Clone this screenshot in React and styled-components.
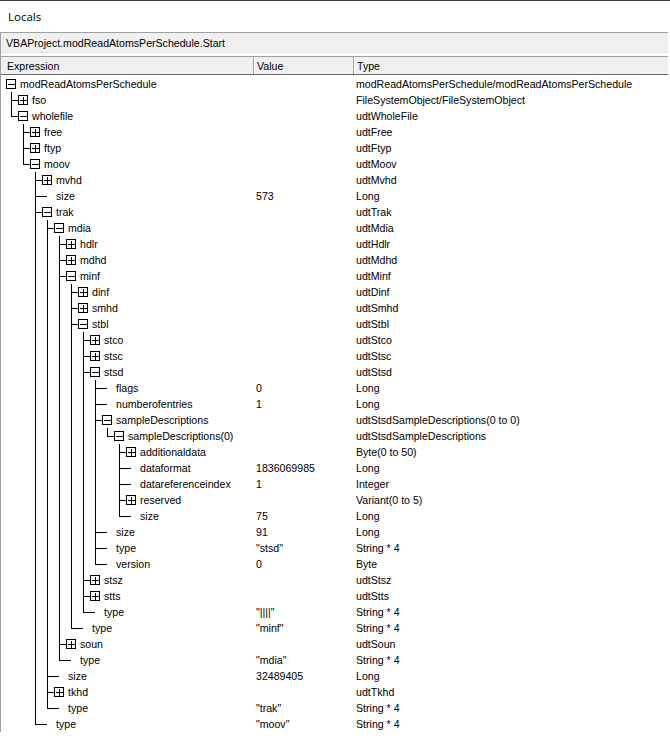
import React from 'react'
import styled, {createGlobalStyle} from "styled-components";

const GlobalStyle = createGlobalStyle`
  html, body {
    margin: 0;
    padding: 0;
    background: #ffffff;
  }
`

// [level, state ('+', '-' or ''), name, value, type]
const rows = [
  [0, '-', 'modReadAtomsPerSchedule', '', 'modReadAtomsPerSchedule/modReadAtomsPerSchedule'],
  [1, '+', 'fso', '', 'FileSystemObject/FileSystemObject'],
  [1, '-', 'wholefile', '', 'udtWholeFile'],
  [2, '+', 'free', '', 'udtFree'],
  [2, '+', 'ftyp', '', 'udtFtyp'],
  [2, '-', 'moov', '', 'udtMoov'],
  [3, '+', 'mvhd', '', 'udtMvhd'],
  [3, '', 'size', '573', 'Long'],
  [3, '-', 'trak', '', 'udtTrak'],
  [4, '-', 'mdia', '', 'udtMdia'],
  [5, '+', 'hdlr', '', 'udtHdlr'],
  [5, '+', 'mdhd', '', 'udtMdhd'],
  [5, '-', 'minf', '', 'udtMinf'],
  [6, '+', 'dinf', '', 'udtDinf'],
  [6, '+', 'smhd', '', 'udtSmhd'],
  [6, '-', 'stbl', '', 'udtStbl'],
  [7, '+', 'stco', '', 'udtStco'],
  [7, '+', 'stsc', '', 'udtStsc'],
  [7, '-', 'stsd', '', 'udtStsd'],
  [8, '', 'flags', '0', 'Long'],
  [8, '', 'numberofentries', '1', 'Long'],
  [8, '-', 'sampleDescriptions', '', 'udtStsdSampleDescriptions(0 to 0)'],
  [9, '-', 'sampleDescriptions(0)', '', 'udtStsdSampleDescriptions'],
  [10, '+', 'additionaldata', '', 'Byte(0 to 50)'],
  [10, '', 'dataformat', '1836069985', 'Long'],
  [10, '', 'datareferenceindex', '1', 'Integer'],
  [10, '+', 'reserved', '', 'Variant(0 to 5)'],
  [10, '', 'size', '75', 'Long'],
  [8, '', 'size', '91', 'Long'],
  [8, '', 'type', '"stsd"', 'String * 4'],
  [8, '', 'version', '0', 'Byte'],
  [7, '+', 'stsz', '', 'udtStsz'],
  [7, '+', 'stts', '', 'udtStts'],
  [7, '', 'type', '"||||"', 'String * 4'],
  [6, '', 'type', '"minf"', 'String * 4'],
  [5, '+', 'soun', '', 'udtSoun'],
  [5, '', 'type', '"mdia"', 'String * 4'],
  [4, '', 'size', '32489405', 'Long'],
  [4, '+', 'tkhd', '', 'udtTkhd'],
  [4, '', 'type', '"trak"', 'String * 4'],
  [3, '', 'type', '"moov"', 'String * 4'],
]

// does the line at level k keep going below row i?
const continues = (i, k) => {
  for (let j = i + 1; j < rows.length; j++) {
    if (rows[j][0] <= k) return rows[j][0] === k
  }
  return false
}

const Container = styled.div`
  width: 670px;
  height: 744px;
  overflow: hidden;
  border-top: 1px solid #3c3c3c;
  box-sizing: border-box;
  font-family: "Liberation Sans", Arial, sans-serif;
  font-size: 10.6px;
  color: #000;
`

const TitleBar = styled.div`
  height: 31px;
  display: flex;
  align-items: center;
  padding-left: 8px;
  font-family: "Open Sans", "Liberation Sans", sans-serif;
  font-size: 11.5px;
  color: #000;
`

const Panel = styled.div`
  border-left: 1px solid #a0a0a0;
  width: 667px;
`

const ContextBar = styled.div`
  height: 19px;
  display: flex;
  align-items: center;
  padding-left: 5px;
  background: #f0f0f0;
  border-top: 1px solid #a0a0a0;
  border-bottom: 1px solid #e3e3e3;
`

const Gap = styled.div`
  height: 3px;
  background: #ffffff;
`

const Header = styled.div`
  display: grid;
  grid-template-columns: 253px 100px 1fr;
  height: 17px;
  background: #f0f0f0;
  border-top: 1px solid #a0a0a0;
  border-bottom: 1px solid #696969;
`

const HeadCell = styled.div`
  display: flex;
  align-items: center;
  padding-left: ${props => props.first ? "6px" : "3px"};
  border-right: ${props => props.last ? "none" : "1px solid #a0a0a0"};
  box-shadow: ${props => props.first ? "none" : "inset 1px 0 0 #ffffff"};
`

const Body = styled.div`
  display: flex;
  flex-direction: column;
  padding-top: 1px;
`

const Row = styled.div`
  display: grid;
  grid-template-columns: 253px 100px 1fr;
  height: 16px;
  line-height: 16px;
  white-space: nowrap;
`

const Expr = styled.div`
  display: flex;
  align-items: center;
`

const Name = styled.span`
  padding-left: 1px;
`

const Cell = styled.div`
  padding-left: 2px;
`

const Guides = ({i, level, state}) => {
  const width = 12 * level + 18
  const lines = []
  for (let k = 1; k < level; k++) {
    if (continues(i, k)) {
      const x = 12 * k - 2 + 0.5
      lines.push(<line key={'v' + k} x1={x} y1={0} x2={x} y2={16} />)
    }
  }
  if (level > 0) {
    const x = 12 * level - 2 + 0.5
    lines.push(<line key="own" x1={x} y1={0} x2={x} y2={continues(i, level) ? 16 : 8.5} />)
    const end = state ? 12 * level + 5 : 12 * level + 10
    lines.push(<line key="h" x1={12 * level - 2} y1={8.5} x2={end} y2={8.5} />)
  }
  const bx = 12 * level + 5
  return (
    <svg width={width} height={16} style={{flex: 'none'}} shapeRendering="crispEdges">
      <g stroke="#000" strokeWidth="1">
        {lines}
        {state && (
          <>
            <rect x={bx + 0.5} y={3.5} width={9} height={9} fill="#fff" />
            <line x1={bx + 2} y1={8.5} x2={bx + 9} y2={8.5} />
            {state === '+' && <line x1={bx + 5.5} y1={5} x2={bx + 5.5} y2={12} />}
          </>
        )}
      </g>
    </svg>
  )
}

const App = () => {
  return (
    <Container>
      <GlobalStyle />
      <TitleBar>Locals</TitleBar>
      <Panel>
        <ContextBar>VBAProject.modReadAtomsPerSchedule.Start</ContextBar>
        <Gap />
        <Header>
          <HeadCell first>Expression</HeadCell>
          <HeadCell>Value</HeadCell>
          <HeadCell last>Type</HeadCell>
        </Header>
        <Body>
          {rows.map(([level, state, name, value, type], i) => (
            <Row key={i}>
              <Expr>
                <Guides i={i} level={level} state={state} />
                <Name>{name}</Name>
              </Expr>
              <Cell>{value}</Cell>
              <Cell>{type}</Cell>
            </Row>
          ))}
        </Body>
      </Panel>
    </Container>
  )
}

export default App;
